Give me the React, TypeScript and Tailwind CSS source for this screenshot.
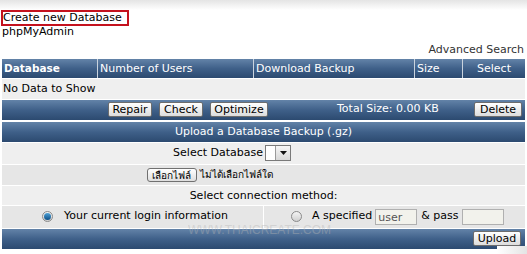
import React from 'react';

const head = 'bg-gradient-to-b from-[#6383a8] via-[#3f6089] to-[#2c4a70] text-white';

function Btn({ label, className = '' }: { label: string; className?: string }) {
  return (
    <button
      className={`h-[15px] px-[3px] leading-[13px] text-[11px] text-black border border-[#6d6d6d] rounded-[2px] bg-gradient-to-b from-white to-[#dcdcdc] ${className}`}
    >
      {label}
    </button>
  );
}

function Radio({ checked }: { checked?: boolean }) {
  return (
    <span className="inline-flex w-[11px] h-[11px] rounded-full border border-[#8a8a8a] bg-gradient-to-b from-[#f4f4f4] to-[#d0d0d0] items-center justify-center">
      {checked && <span className="w-[7px] h-[7px] rounded-full bg-gradient-to-b from-[#4fa3d8] to-[#0b4f86]" />}
    </span>
  );
}

export default function App() {
  return (
    <div
      className="relative w-[527px] h-[254px] overflow-hidden bg-white text-[11px] text-black"
      style={{ fontFamily: '"DejaVu Sans", Verdana, sans-serif' }}
    >
      <div className="h-[10px] bg-gradient-to-b from-[#e4e4e4] to-white" />
      <div className="pl-[1px]">
        <div className="inline-block h-[16px] w-[128px] border-2 border-[#c4121e] leading-[12px] whitespace-nowrap">
          Create new Database
        </div>
      </div>
      <div className="pl-[2px] h-[12px] leading-[10px]">phpMyAdmin</div>
      <div className="h-[20px] pt-[5px] pr-[3px] text-right text-[#333] leading-[12px]">Advanced Search</div>

      <div className="ml-[2px] w-[523px] flex flex-col gap-px bg-white">
        {/* header */}
        <div className="flex h-[19px] gap-px bg-[#c9d3de]">
          <div className={`${head} w-[95px] pl-[2px] font-bold text-[10.5px] leading-[19px]`}>Database</div>
          <div className={`${head} w-[155px] pl-[2px] leading-[19px]`}>Number of Users</div>
          <div className={`${head} w-[160px] pl-[2px] leading-[19px]`}>Download Backup</div>
          <div className={`${head} w-[47px] pl-[2px] leading-[19px]`}>Size</div>
          <div className={`${head} flex-1 text-center leading-[19px]`}>Select</div>
        </div>
        <div className="h-[20px] bg-[#efefef] pl-[1px] leading-[20px]">No Data to Show</div>
        <div className={`${head} h-[20px] flex items-center`}>
          <div className="w-[266px] flex justify-end gap-[7px]">
            <Btn label="Repair" className="w-[44px]" />
            <Btn label="Check" className="w-[44px]" />
            <Btn label="Optimize" className="w-[58px]" />
          </div>
          <div className="ml-[69px] w-[115px] whitespace-nowrap">Total Size: 0.00 KB</div>
          <div className="flex-1 flex justify-end pr-[3px]">
            <Btn label="Delete" className="w-[48px]" />
          </div>
        </div>
        <div className="mt-px flex flex-col gap-px">
          <div className={`${head} h-[20px] text-center leading-[20px]`}>Upload a Database Backup (.gz)</div>
          <div className="h-[21px] bg-[#efefef] flex items-center">
            <span className="w-[261px] text-right">Select Database</span>
            <span className="ml-[2px] flex h-[16px] border border-[#7a7a7a] bg-white">
              <span className="w-[9px]" />
              <span className="w-[15px] border-l border-[#9a9a9a] bg-gradient-to-b from-[#f6f6f6] to-[#d8d8d8] flex items-center justify-center">
                <svg width="7" height="4" viewBox="0 0 7 4"><path d="M0 0h7L3.5 4z" fill="#111" /></svg>
              </span>
            </span>
          </div>
          <div className="h-[20px] bg-[#e6e6e6] flex items-center justify-center">
            <div className="w-[234px] flex items-center gap-[3px]">
              <button
                className="h-[14px] w-[50px] leading-[12px] text-[10px] border border-[#707070] rounded-[3px] bg-gradient-to-b from-white to-[#dedede]"
                style={{ fontFamily: '"Noto Sans", "DejaVu Sans", sans-serif' }}
              >
                เลือกไฟล์
              </button>
              <span className="text-[10px]" style={{ fontFamily: '"Noto Sans", "DejaVu Sans", sans-serif' }}>ไม่ได้เลือกไฟล์ใด</span>
            </div>
          </div>
          <div className="h-[19px] bg-[#efefef] text-center leading-[19px]">Select connection method:</div>
          <div className="h-[22px] flex gap-px">
            <div className="w-[261px] bg-[#e6e6e6] flex items-center pl-[40px] gap-[11px]">
              <Radio checked />
              <span>Your current login information</span>
            </div>
            <div className="flex-1 bg-[#e6e6e6] flex items-center pl-[27px]">
              <Radio />
              <span className="ml-[10px]">A specified</span>
              <span className="ml-[3px] w-[42px] h-[16px] border border-[#b0b0b0] bg-[#f2f2ec] text-[#555] pl-[2px] leading-[15px]">user</span>
              <span className="ml-[4px]">&amp; pass</span>
              <span className="ml-[3px] w-[42px] h-[16px] border border-[#b0b0b0] bg-[#f2f2ec]" />
            </div>
          </div>
          <div className={`${head} h-[20px] flex items-center justify-end pr-[4px]`}>
            <Btn label="Upload" className="w-[48px]" />
          </div>
        </div>
      </div>

      <div
        className="absolute left-[188px] top-[221px] text-[12px] text-[#b5b5b5] opacity-40 pointer-events-none"
        style={{ fontFamily: '"Liberation Sans", Arial, sans-serif' }}
      >
        WWW.THAICREATE.COM
      </div>
      <div className="absolute right-0 bottom-0 w-[30px] h-[8px] bg-gradient-to-l from-[#e4e4e4] to-white" />
    </div>
  );
}
